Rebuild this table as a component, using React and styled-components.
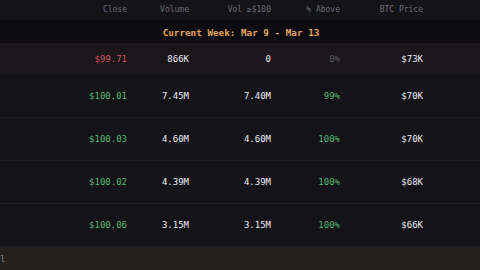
import React from "react";
import styled, { createGlobalStyle } from "styled-components";

const Global = createGlobalStyle`
  html, body {
    margin: 0;
    padding: 0;
    background: #131318;
    overflow: hidden;
  }
  body {
    font-family: "DejaVu Sans Mono", "Liberation Mono", monospace;
  }
`;

const Page = styled.div`
  width: 480px;
  height: 270px;
  display: flex;
  flex-direction: column;
  background: #131318;
  overflow: hidden;
`;

const COLS = "60px 67px 62px 82px 69px 83px 1fr";

const HeadRow = styled.div`
  display: grid;
  grid-template-columns: ${COLS};
  align-items: center;
  height: 21px;
  flex-shrink: 0;
  background: #131318;
  border-bottom: 1px solid #0a0a0d;
  box-sizing: border-box;
`;

const HeadCell = styled.div`
  text-align: right;
  font-size: 8px;
  color: #6c6c75;
  white-space: nowrap;
  padding-bottom: 1px;
`;

const WeekBand = styled.div`
  height: 22px;
  flex-shrink: 0;
  display: flex;
  align-items: center;
  justify-content: center;
  background: #0c0c10;
  color: #e3a35c;
  font-size: 9.3px;
  font-weight: bold;
  padding-left: 2px;
`;

const Row = styled.div`
  display: grid;
  grid-template-columns: ${COLS};
  align-items: center;
  height: ${(p) => p.$h}px;
  flex-shrink: 0;
  background: ${(p) => (p.$current ? "#1a161a" : "#131318")};
  border-bottom: 1px solid ${(p) => (p.$current ? "#141317" : "#1d1d23")};
  box-sizing: border-box;
`;

const Cell = styled.div`
  text-align: right;
  font-size: 9px;
  white-space: nowrap;
  color: ${(p) =>
    p.$tone === "red"
      ? "#d4525f"
      : p.$tone === "green"
      ? "#55b872"
      : p.$tone === "muted"
      ? "#56565e"
      : "#ececf0"};
`;

const Footer = styled.div`
  flex: 1;
  background: #251f1d;
  display: flex;
  align-items: center;
  font-size: 9px;
  color: #8c8580;
`;

const rows = [
  { close: "$99.71", vol: "866K", vol100: "0", pct: "0%", btc: "$73K", down: true },
  { close: "$100.01", vol: "7.45M", vol100: "7.40M", pct: "99%", btc: "$70K" },
  { close: "$100.03", vol: "4.60M", vol100: "4.60M", pct: "100%", btc: "$70K" },
  { close: "$100.02", vol: "4.39M", vol100: "4.39M", pct: "100%", btc: "$68K" },
  { close: "$100.06", vol: "3.15M", vol100: "3.15M", pct: "100%", btc: "$66K" },
];

const App = () => {
  return (
    <Page>
      <Global />
      <HeadRow>
        <div />
        <HeadCell>Close</HeadCell>
        <HeadCell>Volume</HeadCell>
        <HeadCell>Vol ≥$100</HeadCell>
        <HeadCell>% Above</HeadCell>
        <HeadCell>BTC Price</HeadCell>
        <div />
      </HeadRow>
      <WeekBand>Current Week: Mar 9 - Mar 13</WeekBand>
      {rows.map((r, i) => (
        <Row key={i} $current={i === 0} $h={i === 0 ? 32 : 43}>
          <div />
          <Cell $tone={r.down ? "red" : "green"}>{r.close}</Cell>
          <Cell>{r.vol}</Cell>
          <Cell>{r.vol100}</Cell>
          <Cell $tone={r.down ? "muted" : "green"}>{r.pct}</Cell>
          <Cell>{r.btc}</Cell>
          <div />
        </Row>
      ))}
      <Footer>l</Footer>
    </Page>
  );
};

export default App;
